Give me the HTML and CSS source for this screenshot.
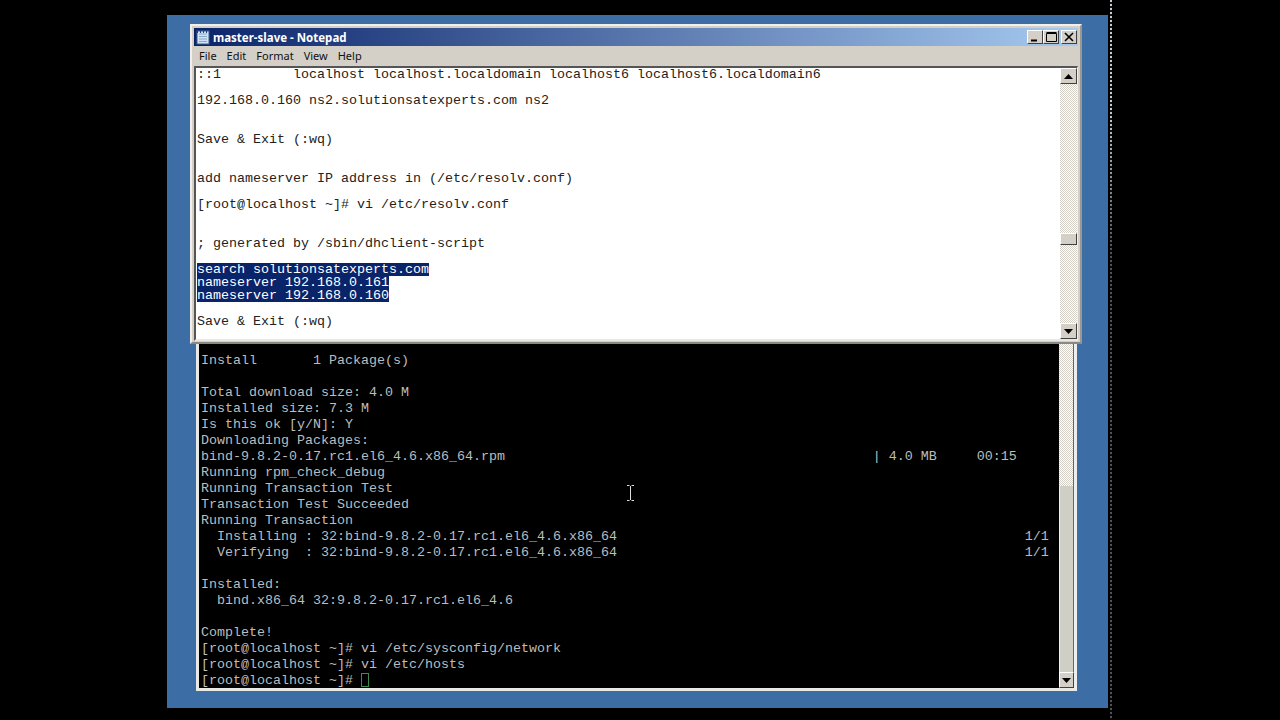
FILE: index.html
```html
<!DOCTYPE html>
<html lang="en">
<head>
<meta charset="utf-8">
<title>master-slave - Notepad</title>
<link rel="stylesheet" href="styles.css">
</head>
<body>
<div class="desktop">
  <div class="terminal">
    <pre class="term-text">Install       1 Package(s)

Total download size: 4.0 M
Installed size: 7.3 M
Is this ok [y/N]: Y
Downloading Packages:
bind-9.8.2-0.17.rc1.el6_4.6.x86_64.rpm                                              | 4.0 MB     00:15
Running rpm_check_debug
Running Transaction Test
Transaction Test Succeeded
Running Transaction
  Installing : 32:bind-9.8.2-0.17.rc1.el6_4.6.x86_64                                                   1/1
  Verifying  : 32:bind-9.8.2-0.17.rc1.el6_4.6.x86_64                                                   1/1

Installed:
  bind.x86_64 32:9.8.2-0.17.rc1.el6_4.6

Complete!
[root@localhost ~]# vi /etc/sysconfig/network
[root@localhost ~]# vi /etc/hosts
[root@localhost ~]# <span class="caret"></span></pre>
    <div class="term-scroll">
      <div class="term-track"></div>
      <div class="term-thumb"></div>
      <div class="sb-btn term-down"><svg width="9" height="5" viewBox="0 0 9 5"><path d="M0 0h9L4.500 5z" fill="#000"/></svg></div>
    </div>
  </div>
  <div class="notepad">
    <div class="titlebar">
      <svg class="np-icon" width="14" height="15" viewBox="0 0 14 15"><rect x="1" y="1" width="12" height="13" fill="#cfe3f5" stroke="#3d5f8c"/><path d="M3 4h8M3 6.500h8M3 9h8M3 11.500h8" stroke="#8aa8c8"/><path d="M1 1h1v2H1zM4 1h1v2H4zM7 1h1v2H7zM10 1h1v2h-1z" fill="#24406c"/></svg>
      <span class="title">master-slave - Notepad</span>
      <div class="caption-btns">
        <div class="cap-btn"><svg width="10" height="10" viewBox="0 0 10 10"><path d="M1 7.500h6v2H1z" fill="#000"/></svg></div>
        <div class="cap-btn"><svg width="11" height="10" viewBox="0 0 11 10"><path d="M.5 1.500h10v8H.5zM.5.500h10" fill="none" stroke="#000"/></svg></div>
        <div class="cap-btn close"><svg width="10" height="10" viewBox="0 0 10 10"><path d="M1 1l8 8M9 1l-8 8" fill="none" stroke="#000" stroke-width="1.600"/></svg></div>
      </div>
    </div>
    <div class="menubar">
      <span class="menu-item">File</span>
      <span class="menu-item">Edit</span>
      <span class="menu-item">Format</span>
      <span class="menu-item">View</span>
      <span class="menu-item">Help</span>
    </div>
    <div class="client">
      <pre class="np-text">::1         localhost localhost.localdomain localhost6 localhost6.localdomain6

192.168.0.160 ns2.solutionsatexperts.com ns2


Save &amp; Exit (:wq)


add nameserver IP address in (/etc/resolv.conf)

[root@localhost ~]# vi /etc/resolv.conf


; generated by /sbin/dhclient-script

<span class="sel">search solutionsatexperts.com</span>
<span class="sel">nameserver 192.168.0.161</span>
<span class="sel">nameserver 192.168.0.160</span>

Save &amp; Exit (:wq)</pre>
      <div class="np-scroll">
        <div class="sb-btn"><svg width="9" height="5" viewBox="0 0 9 5"><path d="M0 5h9L4.500 0z" fill="#000"/></svg></div>
        <div class="np-track"><div class="np-thumb"></div></div>
        <div class="sb-btn"><svg width="9" height="5" viewBox="0 0 9 5"><path d="M0 0h9L4.500 5z" fill="#000"/></svg></div>
      </div>
    </div>
  </div>
  <svg class="ibeam" width="7" height="16" viewBox="0 0 7 16"><path d="M0 .5h2.500M4.500 .5H7M3.500 1v14M0 15.500h2.500M4.500 15.500H7" stroke="#ddd" fill="none"/></svg>
</div>
<div class="streak"></div>
</body>
</html>
```
FILE: styles.css
```css
* { box-sizing: border-box; }
html, body { margin: 0; height: 100%; background: #000; overflow: hidden; }
body { position: relative; width: 1280px; height: 720px; }
pre { margin: 0; font-family: "Liberation Mono", monospace; font-size: 13.33px; }

.desktop {
  position: absolute; left: 167px; top: 15px;
  width: 941px; height: 693px;
  background: #3c6ea5;
}
.streak {
  position: absolute; left: 1110px; top: 0; width: 2px; height: 720px;
  background: repeating-linear-gradient(to bottom, #c8ccd4 0 2px, #141414 2px 4px);
  -webkit-mask-image: linear-gradient(to bottom, #000 15%, rgba(0,0,0,.4) 35%);
  mask-image: linear-gradient(to bottom, #000 15%, rgba(0,0,0,.4) 35%);
}

.notepad {
  position: absolute; left: 23px; top: 9px;
  width: 892px; height: 320px;
  background: #d4d0c8;
  border: 2px solid; border-color: #f1efe9 #9a9890 #8a8880 #f1efe9;
  padding: 2px 2px 1px 2px;
  display: flex; flex-direction: column;
}
.titlebar {
  height: 18px; flex: none;
  display: flex; align-items: center; gap: 3px;
  padding-left: 2px;
  background: linear-gradient(to right, #0a246a, #a6caf0);
}
.np-icon { flex: none; }
.title {
  color: #fff; font: bold 11.500px "Noto Sans", sans-serif; white-space: nowrap;
}
.caption-btns { margin-left: auto; display: flex; align-items: center; padding-right: 1px; }
.cap-btn {
  width: 16px; height: 14px; background: #d4d0c8;
  border: 1px solid; border-color: #fff #404040 #404040 #fff;
  display: flex; align-items: center; justify-content: center;
}
.cap-btn.close { margin-left: 2px; }

.menubar {
  height: 20px; flex: none; display: flex; align-items: flex-start;
  padding-top: 2px;
  font: 11px "Noto Sans", sans-serif; color: #111;
}
.menu-item { padding: 0 5px; }

.client {
  flex: 1; min-height: 0; display: flex;
  background: #fff;
  border-style: solid; border-width: 2px 1px 2px 2px; border-color: #555 #f0f0f0 #e8e8e4 #555;
}
.np-text {
  flex: 1; min-width: 0; color: #222; line-height: 13px;
  padding: 0 0 0 1px; overflow: hidden;
}
.sel { display: inline-block; height: 13px; background: #0a246a; color: #fff; }
.np-scroll { width: 17px; flex: none; display: flex; flex-direction: column; }
.np-track {
  flex: 1; position: relative;
  background: repeating-conic-gradient(#fff 0 25%, #d4d0c8 0 50%) 0 0 / 2px 2px;
}
.np-thumb {
  position: absolute; left: 0; right: 0; top: 149px; height: 12px;
  background: #d4d0c8; border: 1px solid; border-color: #fff #404040 #404040 #fff;
}
.sb-btn {
  height: 16px; width: 17px; flex: none; background: #d4d0c8;
  border: 1px solid; border-color: #fff #404040 #404040 #fff;
  display: flex; align-items: center; justify-content: center;
}

.terminal {
  position: absolute; left: 29px; top: 328px;
  width: 881px; height: 348px;
  background: #000;
  border-left: 3px solid #e8e8e4; border-right: 3px solid #eee; border-bottom: 3px solid #e8e8e4;
  display: flex;
}
.term-text {
  flex: 1; min-width: 0; color: #bdbdbd; line-height: 16px;
  padding: 10px 0 0 2px; overflow: hidden;
}
.caret {
  display: inline-block; width: 8px; height: 14px; vertical-align: -3px;
  border: 1px solid #3f8a4a;
}
.term-scroll {
  width: 15px; flex: none; display: flex; flex-direction: column;
  border-right: 1px solid #6a665c;
}
.term-track {
  height: 143px; flex: none;
  background: repeating-conic-gradient(#fff 0 25%, #d4d0c8 0 50%) 0 0 / 2px 2px;
}
.term-thumb { flex: 1; background: #d0cfc6; border-left: 1px solid #efefe8; }
.term-down { width: 15px; }

.ibeam { position: absolute; left: 460px; top: 470px; }
```
